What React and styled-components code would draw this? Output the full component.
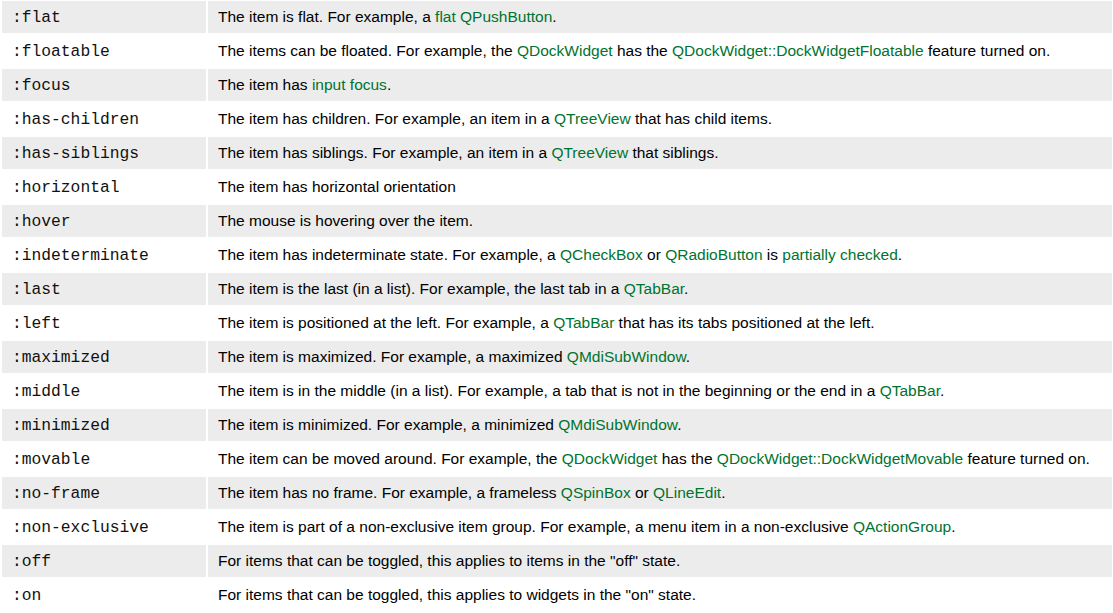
import styled, { createGlobalStyle } from "styled-components";

const GlobalStyle = createGlobalStyle`
	html, body {
		margin: 0;
		padding: 0;
		background: #ffffff;
		overflow: hidden;
	}
`;

const rows = [
	[":flat", "The item is flat. For example, a [flat QPushButton]."],
	[":floatable", "The items can be floated. For example, the [QDockWidget] has the [QDockWidget::DockWidgetFloatable] feature turned on."],
	[":focus", "The item has [input focus]."],
	[":has-children", "The item has children. For example, an item in a [QTreeView] that has child items."],
	[":has-siblings", "The item has siblings. For example, an item in a [QTreeView] that siblings."],
	[":horizontal", "The item has horizontal orientation"],
	[":hover", "The mouse is hovering over the item."],
	[":indeterminate", "The item has indeterminate state. For example, a [QCheckBox] or [QRadioButton] is [partially checked]."],
	[":last", "The item is the last (in a list). For example, the last tab in a [QTabBar]."],
	[":left", "The item is positioned at the left. For example, a [QTabBar] that has its tabs positioned at the left."],
	[":maximized", "The item is maximized. For example, a maximized [QMdiSubWindow]."],
	[":middle", "The item is in the middle (in a list). For example, a tab that is not in the beginning or the end in a [QTabBar]."],
	[":minimized", "The item is minimized. For example, a minimized [QMdiSubWindow]."],
	[":movable", "The item can be moved around. For example, the [QDockWidget] has the [QDockWidget::DockWidgetMovable] feature turned on."],
	[":no-frame", "The item has no frame. For example, a frameless [QSpinBox] or [QLineEdit]."],
	[":non-exclusive", "The item is part of a non-exclusive item group. For example, a menu item in a non-exclusive [QActionGroup]."],
	[":off", "For items that can be toggled, this applies to items in the \"off\" state."],
	[":on", "For items that can be toggled, this applies to widgets in the \"on\" state."],
];

// split "text [link] text" into plain and link parts
const renderText = (text) =>
	text.split(/(\[[^\]]+\])/).map((part, i) =>
		part.startsWith("[") ? <Link key={i}>{part.slice(1, -1)}</Link> : part
	);

const App = () => {
	return (
		<>
			<GlobalStyle />
			<Table>
				<colgroup>
					<StateCol />
					<col />
				</colgroup>
				<tbody>
					{rows.map(([state, text], i) => (
						<Row key={state} odd={i % 2 === 0}>
							<StateCell>{state}</StateCell>
							<TextCell>{renderText(text)}</TextCell>
						</Row>
					))}
				</tbody>
			</Table>
		</>
	);
};

export default App;

const Table = styled.table`
	width: 1114px;
	margin-top: -1px;
	border-collapse: separate;
	border-spacing: 2px;
	table-layout: fixed;
`;

const StateCol = styled.col`
	width: 204px;
`;

const Row = styled.tr.withConfig({ shouldForwardProp: (p) => p !== "odd" })`
	background: ${(props) => (props.odd ? "#ececec" : "#ffffff")};
`;

const StateCell = styled.td`
	height: 32px;
	padding: 0 10px;
	font-family: "Liberation Mono", "Courier New", monospace;
	font-size: 16.3px;
	color: #111111;
	white-space: nowrap;
	vertical-align: middle;
`;

const TextCell = styled.td`
	height: 32px;
	padding: 0 10px;
	font-family: "Liberation Sans", Arial, sans-serif;
	font-size: 15.5px;
	color: #000000;
	white-space: nowrap;
	vertical-align: middle;
`;

const Link = styled.span`
	color: #00732f;
`;
